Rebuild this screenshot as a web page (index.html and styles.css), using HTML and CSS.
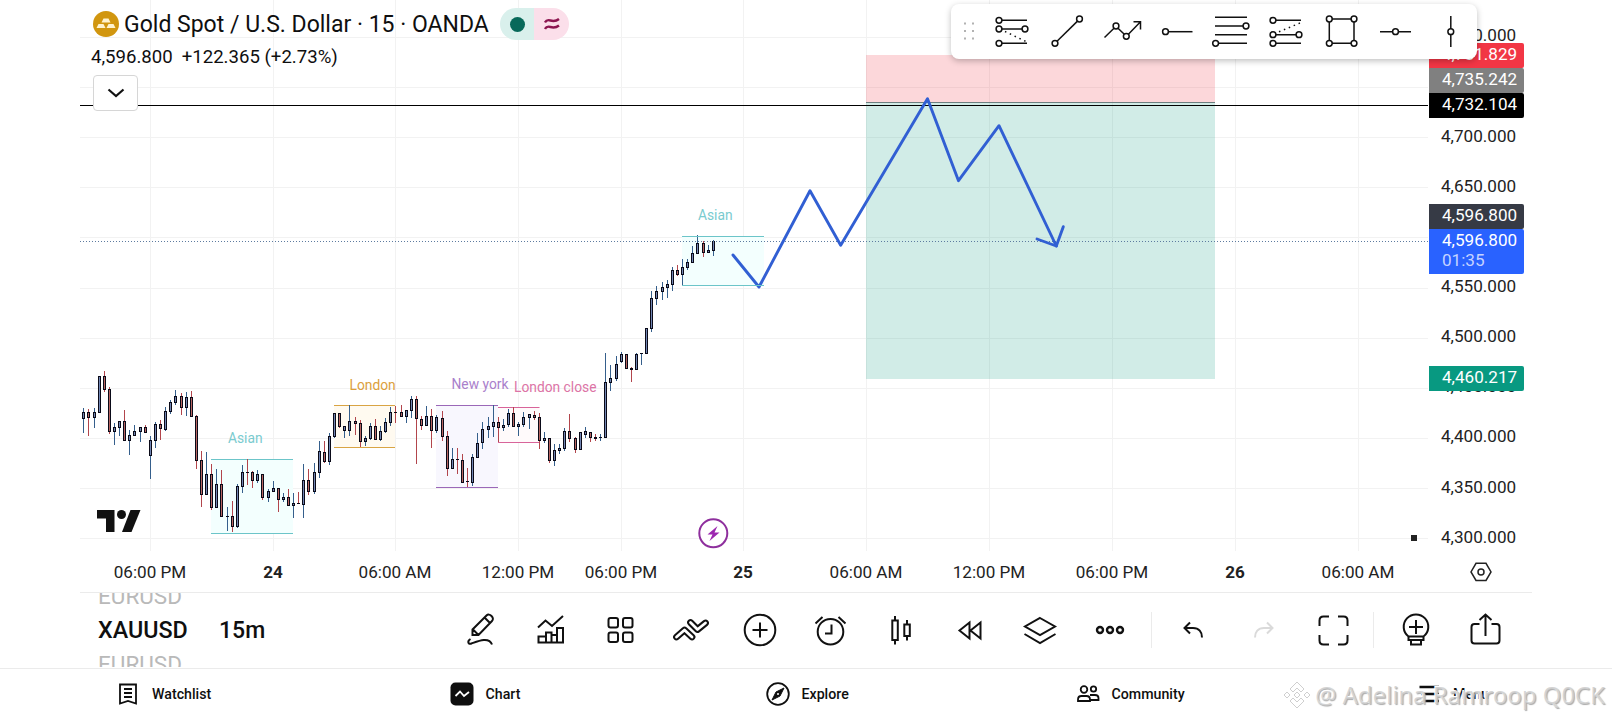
FILE: index.html
```
<!DOCTYPE html>
<html lang="en">
<head>
    <meta charset="UTF-8">
    <title>XAUUSD 15m</title>
    <link rel="stylesheet" href="styles.css">
</head>
<body>
    <div class="app">
        <main class="chart">
            <svg class="chart-svg" viewBox="80 0 1452 592" width="1452" height="592">
                <g id="grid" class="grid"></g>

                <!-- trading sessions -->
                <g class="session">
                    <rect x="211" y="459" width="82" height="74" fill="#f3fffe"/>
                    <path d="M211 459.500H293M211 533.500H293" stroke="#6cc5c9"/>
                    <text x="228" y="443.300" fill="#7acbcf">Asian</text>
                    <rect x="334" y="405" width="61" height="42" fill="#fffaf0"/>
                    <path d="M334 405.500H395M334 447.500H395" stroke="#d9a443"/>
                    <text x="349.500" y="390" fill="#dc9f3c">London</text>
                    <rect x="436" y="405" width="62" height="82" fill="#f8f7fe"/>
                    <path d="M436 405.500H498M436 487.500H498" stroke="#9b68b8"/>
                    <text x="451.500" y="389" fill="#a980cb">New york</text>
                    <rect x="498" y="407" width="41.500" height="35" fill="#fffafb"/>
                    <path d="M498 407.500H539.500M498 442.500H539.500" stroke="#d8649a"/>
                    <text x="514" y="392" fill="#dc74a6">London close</text>
                    <rect x="682" y="236" width="82" height="49" fill="#f3fffe"/>
                    <text x="698" y="220" fill="#7acbcf">Asian</text>
                </g>

                <g id="candles"></g>

                <!-- short position -->
                <rect x="866" y="55" width="349" height="47" fill="#f23645" fill-opacity=".2"/>
                <rect x="866" y="102" width="349" height="277" fill="#089981" fill-opacity=".19"/>
                <path d="M866 102.500H1215" stroke="#6d7f80"/>

                <path d="M80 105.500H1428" stroke="#000"/>
                <path d="M80 241.500H1428" stroke="#5d7ba0" stroke-dasharray="1 2"/>

                <g class="forecast">
                    <path d="M733 255L759 287L810 190.700L840.700 245.300L927.500 98.700L958.500 180.700L999 125.700L1056.300 246"/>
                    <path d="M1037 239L1056.300 246L1063.300 226.700"/>
                </g>
                <path d="M682 236.500H764M682 285.500H764" stroke="#6cc5c9"/>

                <circle cx="713.300" cy="533.300" r="14" fill="#fff" stroke="#8e2f9d" stroke-width="2"/>
                <path d="M717.500 526L707.500 534.500H712.500L709.500 541L719.500 532.500H714.500Z" fill="#9c27b0"/>

                <!-- logo -->
                <g fill="#111">
                    <path d="M97 510H114.500V532H106V518.500H97Z"/>
                    <circle cx="121.500" cy="514.500" r="4.500"/>
                    <path d="M130.500 510H140.500L131.500 532H122Z"/>
                </g>
                <rect x="1411" y="535" width="6" height="6" fill="#222"/>

                <g id="prices" class="axis"></g>
                <g id="times" class="axis times"></g>
                <g id="tags" class="axis"></g>

                <g fill="none" stroke="#222" stroke-width="1.500">
                    <path d="M1476 563.300H1486L1491 571.900L1486 580.500H1476L1471 571.900Z"/>
                    <circle cx="1481" cy="571.900" r="3"/>
                </g>
            </svg>

            <div class="legend">
                <div class="legend-title">
                    <svg width="26" height="26" viewBox="0 0 26 26">
                        <circle cx="13" cy="13" r="13" fill="#d1960f"/>
                        <path d="M10.500 7.500H15.500L17.500 11.500H8.500ZM5.500 13H10.500L12.500 17H3.500ZM15.500 13H20.500L22.500 17H13.500Z" fill="#fff3cf"/>
                    </svg>
                    <span class="symbol-name">Gold Spot / U.S. Dollar · 15 · OANDA</span>
                    <span class="status">
                        <span class="status-open"><i class="dot"></i></span>
                        <span class="status-delay">
                            <svg width="16" height="14" viewBox="0 0 16 14"><path d="M1 5.500C4-.5 8 7.500 15 2M1 12C4 6 8 14 15 8.500"/></svg>
                        </span>
                    </span>
                </div>
                <div class="quote"><span>4,596.800</span><span>+122.365 (+2.73%)</span></div>
                <button class="collapse">
                    <svg width="18" height="10" viewBox="0 0 18 10"><path d="M1.500 1.500L9 8L16.500 1.500"/></svg>
                </button>
            </div>

            <div class="drawbar">
                <svg class="handle" width="12" height="18" viewBox="0 0 12 18"><path d="M1 1.500h2M9 1.500h2M1 9h2M9 9h2M1 16.500h2M9 16.500h2"/></svg>
                <svg viewBox="0 0 40 40"><path d="M10 9.300H35M10 18H30M10 32.300H35"/><circle cx="7" cy="9.300" r="2.900"/><circle cx="7" cy="18" r="2.900"/><circle cx="33" cy="18" r="2.900"/><circle cx="7" cy="32.300" r="2.900"/><path class="dots" d="M13 20.500L34 30.500"/></svg>
                <svg viewBox="0 0 40 40"><path d="M10 30.200L30.500 10.100"/><circle cx="8" cy="32.300" r="2.900"/><circle cx="32.500" cy="8" r="2.900"/></svg>
                <svg viewBox="0 0 40 40"><path d="M2.500 26.500L12 17.200M16 17.200L22.300 23.300M26.400 23.200L38.500 10.800M31.500 10.800H38.500V18.500"/><circle cx="14" cy="15" r="2.900"/><circle cx="24.300" cy="25.300" r="2.900"/></svg>
                <svg viewBox="0 0 40 40"><path d="M12.500 20.700H36.500"/><circle cx="9.500" cy="20.700" r="2.900"/></svg>
                <svg viewBox="0 0 40 40"><path d="M4 6.300H36M4 15H32M4 23.700H36M7.500 32.300H36"/><circle cx="35" cy="15" r="2.900"/><circle cx="4.600" cy="32.300" r="2.900"/></svg>
                <svg viewBox="0 0 40 40"><path d="M10 9.300H35M10 23.700H30M10 32.300H35"/><circle cx="7" cy="9.300" r="2.900"/><circle cx="7" cy="23.700" r="2.900"/><circle cx="33" cy="23.700" r="2.900"/><circle cx="7" cy="32.300" r="2.900"/><path class="dots" d="M13 20.800L34 12"/></svg>
                <svg viewBox="0 0 40 40"><path d="M11 8H30M11 32.300H30M8.300 11V29.400M33 11V29.400"/><circle cx="8.300" cy="8" r="2.900"/><circle cx="33" cy="8" r="2.900"/><circle cx="8.300" cy="32.300" r="2.900"/><circle cx="33" cy="32.300" r="2.900"/></svg>
                <svg viewBox="0 0 40 40"><path d="M5 20.700H17.600M23.400 20.700H36"/><circle cx="20.500" cy="20.700" r="2.900"/></svg>
                <svg viewBox="0 0 40 40"><path d="M20.800 5V17.800M20.800 23.600V36"/><circle cx="20.800" cy="20.700" r="2.900"/></svg>
            </div>
        </main>

        <section class="toolbar">
            <div class="symbols">
                <span class="ghost">EURUSD</span>
                <span class="current">XAUUSD</span>
                <span class="ghost">EURUSD</span>
            </div>
            <span class="interval">15m</span>
            <div class="tools">
                <svg viewBox="0 0 40 40"><path d="M11.500 19.500L25.500 5.500C27 4 29 4.500 30.500 6S32.500 9.500 31 11L17.500 25H11.500ZM23.500 7.500L29 13M12 19.500L17.500 25M9.500 29C6 31 7 35 10.500 33.500C16 31.500 28 26 31 34.500"/></svg>
                <svg viewBox="0 0 40 40"><path d="M7 17.500L14.500 10.500L21 16L32 6M7.500 32.500V26.500H15V32.500ZM15 32.500V22.500H20.500V32.500ZM20.500 25H26V32.500M26 32.500V18H32V32.500H7"/></svg>
                <svg viewBox="0 0 40 40"><rect x="7.500" y="8" width="9.500" height="9.500" rx="2"/><rect x="22" y="8" width="9.500" height="9.500" rx="2"/><rect x="7.500" y="22.500" width="9.500" height="9.500" rx="2"/><rect x="22" y="22.500" width="9.500" height="9.500" rx="2"/></svg>
                <svg viewBox="0 0 40 40"><g class="outline-wide"><path d="M5.500 27L13.500 20L21 27M19.500 12.500L26.500 19.500L34.500 13"/></g><g class="outline-gap"><path d="M5.500 27L13.500 20L21 27M19.500 12.500L26.500 19.500L34.500 13"/></g></svg>
                <svg viewBox="0 0 40 40"><circle cx="20" cy="20" r="15.300"/><path d="M20 12.500V27.500M12.500 20H27.500"/></svg>
                <svg viewBox="0 0 40 40"><circle cx="20.500" cy="21.700" r="12.800"/><path d="M21.500 14.500V23.500H15M5.500 13.500L12.500 7M28.500 7L35.500 13.500"/></svg>
                <svg viewBox="0 0 40 40"><rect x="12.300" y="10.500" width="5.500" height="19.500"/><path d="M15 6V10.500M15 30V34.500M27 10V14.500M27 26V30.500"/><rect x="24.300" y="14.500" width="5.500" height="11.500"/></svg>
                <svg viewBox="0 0 40 40"><path d="M19.500 12.500V28.500L9.500 20.500ZM30.500 12.500V28.500L20.500 20.500Z"/></svg>
                <svg viewBox="0 0 40 40"><path d="M20 8L35 16.500L20 25L5 16.500ZM4.500 24L20 33L35.500 24"/></svg>
                <svg class="heavy" viewBox="0 0 40 40"><circle cx="10" cy="20" r="3"/><circle cx="20" cy="20" r="3"/><circle cx="30" cy="20" r="3"/></svg>
                <i class="divider"></i>
                <svg viewBox="0 0 40 40"><path d="M17 12.500L11.500 18L17 23.500M11.500 18H20C26 18 29 22 29 27.500"/></svg>
                <svg class="disabled" viewBox="0 0 40 40"><path d="M24 12.500L29.500 18L24 23.500M29.500 18H21C15 18 12 22 12 27.500"/></svg>
                <svg viewBox="0 0 40 40"><path d="M7.500 16V10.500Q7.500 6.500 11.500 6.500H17M26 6.500H31.500Q35.500 6.500 35.500 10.500V16M35.500 25V30.500Q35.500 34.500 31.500 34.500H26M17 34.500H11.500Q7.500 34.500 7.500 30.500V25"/></svg>
                <i class="divider"></i>
                <svg viewBox="0 0 40 40"><path d="M13.500 26.500A12.300 12.300 0 1 1 28.500 26.500ZM21 10V24M14 17H28M13.500 26.500V30H28.500V26.500M16 30.500V34.500H26V30.500"/></svg>
                <svg viewBox="0 0 40 40"><path d="M14.500 14H9.500Q6.500 14 6.500 17V30.500Q6.500 33.500 9.500 33.500H31.500Q34.500 33.500 34.500 30.500V17Q34.500 14 31.500 14H26.500M20.500 26V5M14.500 10L20.500 4.500L26.500 10"/></svg>
            </div>
        </section>

        <nav class="nav">
            <a class="nav-item"><svg width="24" height="24" viewBox="0 0 24 24"><path d="M4 2.500H20V21.500L12 19L4 21.500ZM8 7H16M8 11H16M8 15H16"/></svg>Watchlist</a>
            <a class="nav-item"><svg width="24" height="24" viewBox="0 0 24 24"><rect x=".5" y=".5" width="23" height="23" rx="5" fill="#0f0f0f" stroke="none"/><path d="M5.500 14L10 9.500L14 14L19 10" stroke="#fff"/></svg>Chart</a>
            <a class="nav-item"><svg width="24" height="24" viewBox="0 0 24 24"><circle cx="12" cy="12" r="10.800"/><path d="M18 6L14 14L6 18L10 10Z" fill="#0f0f0f" stroke-width="1"/><circle cx="12" cy="12" r="1" fill="#fff" stroke="none"/></svg>Explore</a>
            <a class="nav-item"><svg width="24" height="24" viewBox="0 0 24 24"><circle cx="8" cy="7.500" r="3.300"/><circle cx="17.500" cy="7" r="2.700"/><path d="M2 19V17.500Q2 14 5.500 14H10.500Q14 14 14 17.500V19ZM14 13H19Q22.500 13 22.500 16V18H14"/></svg>Community</a>
            <a class="nav-item"><svg class="heavy" width="24" height="24" viewBox="0 0 24 24"><path d="M2.500 5H22M4.500 12H22M4.500 19H22"/></svg>Menu</a>
        </nav>

        <div class="watermark">
            <svg width="30" height="30" viewBox="0 0 30 30"><path d="M8 9L15 2L22 9L19 12L15 8L11 12ZM5 12L8 15L5 18L2 15ZM25 12L28 15L25 18L22 15ZM15 12L18 15L15 18L12 15ZM8 21L11 18L15 22L19 18L22 21L15 28Z"/></svg>
            <span>@ Adelina Ramroop Q0CK</span>
        </div>
    </div>
    <script src="chart.js"></script>
</body>
</html>
```
FILE: styles.css
```
* {
    box-sizing: border-box;
}

body {
    margin: 0;
    background: #fff;
    color: #0f0f0f;
    font-family: Roboto, "Liberation Sans", sans-serif;
    overflow: hidden;
}

.app {
    position: relative;
    display: flex;
    flex-direction: column;
    width: 1612px;
    height: 720px;
}

svg {
    fill: none;
    flex: none;
}

/* chart */
.chart {
    position: relative;
    height: 593px;
    margin: 0 80px;
    border-bottom: 1px solid #ebebeb;
}

.chart-svg {
    display: block;
}

.grid path {
    stroke: #f2f2f2;
}

.session text {
    font-size: 13.8px;
}

.forecast path {
    stroke: #315fd3;
    stroke-width: 2.9;
    stroke-linecap: round;
    stroke-linejoin: round;
}

.axis text {
    fill: #222;
    font-size: 17.1px;
}

.axis .on-tag {
    fill: #fff;
}

.axis .countdown {
    fill: #c5d3ff;
}

.times text {
    text-anchor: middle;
}

.times .day {
    font-weight: bold;
}

.legend {
    position: absolute;
    top: 7px;
    left: 11px;
}

.legend-title {
    display: flex;
    align-items: center;
    height: 35px;
    padding: 0 0 1px 2px;
}

.symbol-name {
    margin: 0 11px 0 5px;
    font-size: 23px;
    white-space: nowrap;
}

.status {
    display: flex;
    width: 69px;
    height: 32px;
    border-radius: 16px;
    overflow: hidden;
}

.status-open,
.status-delay {
    display: flex;
    flex: 1;
    align-items: center;
    justify-content: center;
    background: #d9f0ec;
}

.status-delay {
    background: #fbdfea;
}

.status-delay path {
    stroke: #8c1550;
    stroke-width: 2.4;
}

.dot {
    width: 15px;
    height: 15px;
    border-radius: 50%;
    background: #08695a;
}

.quote {
    display: flex;
    gap: 9px;
    height: 33px;
    padding-top: 4px;
    font-size: 18.6px;
    line-height: 22px;
}

.collapse {
    display: flex;
    align-items: center;
    justify-content: center;
    width: 45px;
    height: 36px;
    margin-left: 2px;
    padding: 0;
    border: 1px solid #d6d6d6;
    border-radius: 4px;
    background: #fff;
}

.collapse path {
    stroke: #111;
    stroke-width: 2.2;
}

.drawbar {
    position: absolute;
    top: 4px;
    left: 871px;
    display: flex;
    align-items: center;
    width: 526px;
    height: 55px;
    padding: 0 0 1px 12px;
    border-radius: 8px;
    background: #fff;
    box-shadow: 0 2px 6px rgba(0, 0, 0, .25);
}

.drawbar svg {
    width: 40px;
    height: 40px;
    margin-right: 14.75px;
    stroke: #111;
    stroke-width: 1.5;
    overflow: visible;
}

.drawbar .handle {
    width: 12px;
    height: 18px;
    margin-right: 17px;
    stroke: #b2b2b2;
    stroke-width: 2;
}

.drawbar .dots {
    stroke-dasharray: 1.5 3.8;
}

/* symbol and tools row */
.toolbar {
    display: flex;
    align-items: center;
    height: 75px;
    padding: 0 0 1px 98px;
}

.symbols {
    display: flex;
    flex-direction: column;
    justify-content: center;
    width: 121px;
    height: 74px;
    overflow: hidden;
    font-size: 23.3px;
    line-height: 34px;
}

.symbols span {
    flex: none;
}

.ghost {
    color: #b9b9b9;
    font-size: 22.5px;
}

.current,
.interval {
    font-weight: 500;
}

.interval {
    width: 227px;
    font-size: 23px;
}

.tools {
    display: flex;
    align-items: center;
}

.tools svg {
    width: 40px;
    height: 40px;
    margin: 0 14.95px;
    stroke: #111;
    stroke-width: 2;
}

.tools .outline-wide {
    stroke-width: 6.8;
    stroke-linecap: round;
    stroke-linejoin: round;
}

.tools .outline-gap {
    stroke: #fff;
    stroke-width: 2.8;
    stroke-linecap: round;
    stroke-linejoin: round;
}

.tools .heavy {
    stroke-width: 2.4;
}

.tools .disabled {
    stroke: #dadada;
}

.divider {
    width: 1px;
    height: 36px;
    margin: 0 6px;
    background: #ebebeb;
}

/* bottom navigation */
.nav {
    display: grid;
    grid-template-columns: 333.5px 316px 310px 341.5px 1fr;
    height: 52px;
    padding: 0 0 2px 116px;
    border-top: 1px solid #ebebeb;
}

.nav-item {
    display: flex;
    align-items: center;
    gap: 12px;
    font-size: 14.2px;
    font-weight: 500;
}

.nav-item svg {
    stroke: #0f0f0f;
    stroke-width: 1.8;
}

.nav-item .heavy {
    stroke-width: 2.6;
}

.watermark {
    position: absolute;
    right: 7px;
    bottom: 9px;
    display: flex;
    align-items: center;
    gap: 3px;
    color: rgba(205, 205, 205, .85);
    font: 23.9px/32px "Noto Sans", "Open Sans", sans-serif;
    text-shadow: -1px -1px 0 #fff, 1px 1px 1px #aaa;
    white-space: nowrap;
}

.watermark path {
    fill: #fff;
    stroke: #cfcfcf;
}
```
FILE: chart.js
```
const NS = 'http://www.w3.org/2000/svg';

function add(parent, tag, attrs, text) {
    const el = document.createElementNS(NS, tag);
    for (const key in attrs) el.setAttribute(key, attrs[key]);
    if (text) el.textContent = text;
    document.getElementById(parent).appendChild(el);
}

// grid
const columns = [150, 273, 395, 518, 621, 743, 866, 989, 1112, 1235, 1358];
for (let i = 0; i < 11; i++) {
    const y = Math.floor(37.3 + i * 50.15) + 0.5;
    add('grid', 'path', { d: `M80 ${y}H1428` });
}
columns.forEach(x => add('grid', 'path', { d: `M${x + 0.5} 0V551` }));

// bars: x, high, body top, body bottom, low, up (1) or down (0), in thirds of a pixel from the origin
const series = [
    { x: 70, y: 360, bars: [
        [40,145,156,177,220,1], [55,148,157,174,227,0], [73,143,156,174,204,1], [88,48,48,158,158,1],
        [103,32,48,89,95,0], [118,80,87,216,222,0], [133,190,202,216,254,1], [148,183,183,204,227,1],
        [163,150,183,242,242,0], [178,211,225,242,285,1], [193,195,213,227,227,1], [211,202,202,215,245,1],
        [227,195,202,218,218,0], [241,227,240,288,356,1], [256,187,192,242,265,1], [271,180,192,208,240,0],
        [286,142,153,210,214,1], [301,120,126,155,162,1], [316,90,108,128,134,1], [334,100,108,143,166,0],
        [349,96,111,143,167,1], [364,93,111,170,170,0], [379,165,168,302,328,0], [394,273,300,405,440,0],
        [409,275,342,404,404,1], [424,312,342,443,450,0], [439,327,373,443,443,1], [454,330,373,470,470,0],
        [472,441,467,469,512,1], [487,423,468,500,517,0], [502,373,378,500,504,1], [517,314,337,380,400,1],
        [532,297,336,338,376,0], [547,332,337,363,383,0], [562,330,342,363,368,1], [577,342,342,413,419,0],
        [595,388,393,413,427,1], [610,362,385,395,395,1], [625,385,385,419,455,0], [640,398,411,419,425,1],
        [655,387,411,437,437,0], [670,400,430,437,475,1], [685,396,429,431,433,0], [700,312,360,434,473,1],
        [715,327,360,396,405,0], [733,309,337,396,403,1], [748,243,272,338,355,1], [763,243,276,305,310,0],
        [778,219,228,305,314,1]
    ] },
    { x: 320, y: 370, bars: [
        [43,129,129,200,204,1], [58,129,129,170,173,0], [73,169,169,182,204,1], [88,106,153,182,197,1],
        [106,142,153,161,196,0], [121,150,159,215,232,0], [136,199,204,215,227,1], [151,158,168,206,210,1],
        [166,146,168,209,209,0], [181,168,183,209,214,1], [196,145,156,185,190,1], [211,112,127,158,168,1],
        [226,109,126,128,160,0], [244,105,127,140,140,0], [259,120,120,140,158,1], [274,78,88,122,145,1],
        [289,78,87,146,281,0], [304,138,146,168,180,0], [319,107,138,168,168,1], [334,118,138,182,233,0],
        [349,135,140,182,188,1], [367,123,143,200,214,0], [382,184,197,297,317,0], [397,233,267,297,297,1],
        [412,235,267,269,312,0], [427,252,270,338,338,0], [442,293,333,335,352,0], [457,252,262,338,348,1],
        [472,189,219,263,263,1], [487,157,177,220,237,1], [505,142,168,180,205,1], [520,106,156,171,200,1],
        [535,141,156,174,215,0], [550,148,165,174,182,1], [565,118,129,166,170,1], [580,112,129,171,171,0],
        [595,155,162,170,197,1], [610,127,141,164,170,1], [628,133,133,145,178,1], [643,122,134,144,150,0],
        [658,128,141,213,238,0], [673,187,205,213,220,1], [688,205,205,273,280,0], [703,223,240,273,287,1],
        [718,222,234,243,252,1], [733,173,183,237,243,1], [748,132,183,207,217,0], [766,200,205,240,250,0],
        [781,187,187,240,240,1], [796,170,184,194,204,1], [811,185,185,204,215,0], [826,192,201,206,214,0],
        [841,192,201,203,212,1]
    ] },
    { x: 580, y: 200, bars: [
        [76,459,546,713,713,1], [91,495,534,549,573,1], [109,469,492,537,544,1], [124,456,461,486,489,1],
        [139,461,461,507,507,0], [154,501,505,510,545,0], [169,459,461,510,510,1], [184,460,460,462,495,1],
        [199,384,384,462,462,1], [214,273,294,387,397,1], [229,258,273,297,314,1], [247,246,262,275,299,1],
        [262,240,252,264,295,1], [277,202,210,255,273,1], [292,195,210,225,228,0], [307,177,201,225,255,1],
        [322,177,186,204,210,1], [337,138,159,188,188,1], [352,106,129,161,161,1], [370,123,129,158,172,0],
        [385,135,150,158,158,1], [400,120,123,153,167,1]
    ] }
];

series.forEach(part => part.bars.forEach(([bx, high, top, bottom, low, up]) => {
    const x = Math.floor(part.x + bx / 3);
    const y = v => Math.round(part.y + v / 3);
    const height = Math.max(1, y(bottom) - y(top));
    add('candles', 'path', { d: `M${x + 0.5} ${y(high)}V${y(low)}`, stroke: up ? '#355f8c' : '#b2454c' });
    add('candles', 'rect', { x: x - 1, y: y(top), width: 3, height: height, fill: '#0a0a18' });
    if (height > 2) {
        add('candles', 'rect', { x: x, y: y(top) + 1, width: 1, height: height - 2, fill: up ? '#7286b4' : '#b86562' });
    }
}));

// price scale
['4,800.000', '', '4,700.000', '4,650.000', '', '4,550.000', '4,500.000', '4,450.000', '4,400.000', '4,350.000', '4,300.000']
    .forEach((label, i) => {
        if (label) add('prices', 'text', { x: 1441, y: 41.2 + i * 50.15 }, label);
    });

const tags = [
    { y: 43, h: 25, color: '#f23645', label: '4,781.829' },
    { y: 68, h: 25, color: '#808080', label: '4,735.242' },
    { y: 93, h: 25, color: '#000', label: '4,732.104' },
    { y: 204, h: 25, color: '#363a45', label: '4,596.800' },
    { y: 229, h: 45, color: '#2962ff', label: '4,596.800' },
    { y: 366, h: 25, color: '#089981', label: '4,460.217' }
];
tags.forEach(t => {
    add('tags', 'path', { d: `M1429 ${t.y}H1522q2 0 2 2v${t.h - 4}q0 2-2 2H1429Z`, fill: t.color });
    add('tags', 'text', { x: 1442, y: t.y + 17, class: 'on-tag' }, t.label);
});
add('tags', 'text', { x: 1442, y: 266, class: 'countdown' }, '01:35');

// time scale
['06:00 PM', '24', '06:00 AM', '12:00 PM', '06:00 PM', '25', '06:00 AM', '12:00 PM', '06:00 PM', '26', '06:00 AM']
    .forEach((label, i) => {
        add('times', 'text', { x: columns[i], y: 577.8, class: label.length < 3 ? 'day' : '' }, label);
    });
```
